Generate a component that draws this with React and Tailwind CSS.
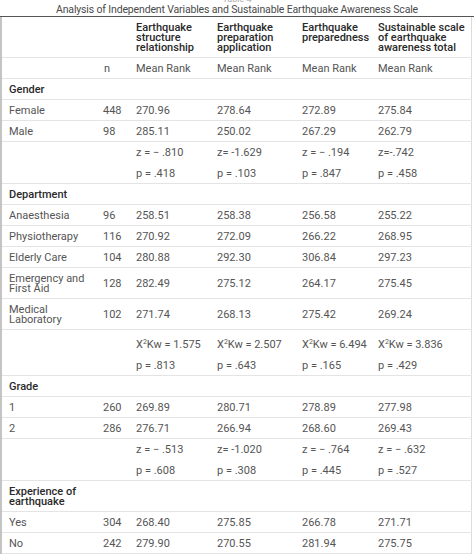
const headers = [
	"Earthquake structure relationship",
	"Earthquake preparation application",
	"Earthquake preparedness",
	"Sustainable scale of earthquake awareness total",
];

const X2 = ({ v }) => (
	<>
		X<span className="relative -top-[4px] text-[7px]">2</span>Kw = {v}
	</>
);

// type: "data" | "section" | "stat1" | "statx" | "stat2"
const rows = [
	{ type: "section", label: "Gender" },
	{ type: "data", label: "Female", n: "448", v: ["270.96", "278.64", "272.89", "275.84"] },
	{ type: "data", label: "Male", n: "98", v: ["285.11", "250.02", "267.29", "262.79"] },
	{ type: "stat1", v: ["z = − .810", "z= -1.629", "z = − .194", "z=-.742"] },
	{ type: "stat2", v: ["p = .418", "p = .103", "p = .847", "p = .458"] },
	{ type: "section", label: "Department" },
	{ type: "data", label: "Anaesthesia", n: "96", v: ["258.51", "258.38", "256.58", "255.22"] },
	{ type: "data", label: "Physiotherapy", n: "116", v: ["270.92", "272.09", "266.22", "268.95"] },
	{ type: "data", label: "Elderly Care", n: "104", v: ["280.88", "292.30", "306.84", "297.23"] },
	{ type: "data", label: "Emergency and First Aid", n: "128", v: ["282.49", "275.12", "264.17", "275.45"] },
	{ type: "data", label: "Medical Laboratory", n: "102", v: ["271.74", "268.13", "275.42", "269.24"] },
	{
		type: "statx",
		v: [<X2 v="1.575" />, <X2 v="2.507" />, <X2 v="6.494" />, <X2 v="3.836" />],
	},
	{ type: "stat2", v: ["p = .813", "p = .643", "p = .165", "p = .429"] },
	{ type: "section", label: "Grade" },
	{ type: "data", label: "1", n: "260", v: ["269.89", "280.71", "278.89", "277.98"] },
	{ type: "data", label: "2", n: "286", v: ["276.71", "266.94", "268.60", "269.43"] },
	{ type: "stat1", v: ["z = − .513", "z= -1.020", "z = − .764", "z = − .632"] },
	{ type: "stat2", v: ["p = .608", "p = .308", "p = .445", "p = .527"] },
	{ type: "section", label: "Experience of earthquake" },
	{ type: "data", label: "Yes", n: "304", v: ["268.40", "275.85", "266.78", "271.71"] },
	{ type: "data", label: "No", n: "242", v: ["279.90", "270.55", "281.94", "275.75"] },
];

const Row = ({ row }) => {
	const pad =
		row.type === "statx"
			? "pt-[10px] pb-[4px]"
			: row.type === "stat1"
			? "pt-[6px] pb-[5px]"
			: "pt-[6px] pb-[4px]";
	const border = row.type === "stat1" || row.type === "statx" ? "" : "border-b border-[#e4e4e4]";

	if (row.type === "section") {
		return (
			<tr className={border}>
				<td className={`pl-[7px] pr-1 ${pad} text-[#2a2a2a] font-medium`}>{row.label}</td>
				<td colSpan={5}></td>
			</tr>
		);
	}

	return (
		<tr className={border}>
			<td className={`pl-[7px] pr-1 ${pad}`}>{row.label}</td>
			<td className={`pl-[3px] ${pad}`}>{row.n}</td>
			{row.v.map((v, i) => (
				<td key={i} className={`pl-[3px] ${pad} whitespace-nowrap`}>
					{v}
				</td>
			))}
		</tr>
	);
};

const App = () => {
	return (
		<div
			className="w-[474px] h-[554px] bg-white overflow-hidden"
			style={{ fontFamily: "Roboto, 'Liberation Sans', sans-serif" }}
		>
			{/* Caption */}
			<div className="h-[16px] overflow-hidden flex flex-col justify-end items-center text-[10.5px] leading-[12px] text-[#555]">
				<div className="text-[9px] leading-[9px] text-[#aaa]">Table 4</div>
				<div className="tracking-[-0.15px] text-[#4a4a4a]">
					Analysis of Independent Variables and Sustainable Earthquake Awareness Scale
				</div>
			</div>
			<div className="h-[1px] bg-[#555]"></div>

			<div className="flex">
				<div className="w-[2px] bg-[#c4c4c4]"></div>
				<div className="w-[470px] border-r border-b border-[#dcdcdc]">
					<table className="w-full table-fixed border-collapse text-[11px] leading-[10px] text-[#555]">
						<colgroup>
							<col className="w-[98px]" />
							<col className="w-[33px]" />
							<col className="w-[81px]" />
							<col className="w-[85px]" />
							<col className="w-[76px]" />
							<col className="w-[97px]" />
						</colgroup>
						<thead>
							<tr className="border-b border-[#e4e4e4]">
								<th></th>
								<th></th>
								{headers.map((h) => (
									<th
										key={h}
										className="pl-[3px] pr-1 pt-[6px] pb-[4px] text-left align-top font-medium text-[#2a2a2a]"
									>
										{h}
									</th>
								))}
							</tr>
							<tr className="border-b border-[#e4e4e4]">
								<td className="pt-[6px] pb-[4px]"></td>
								<td className="pl-[4px] pt-[6px] pb-[4px]">n</td>
								{headers.map((h) => (
									<td key={h} className="pl-[3px] pt-[6px] pb-[4px]">
										Mean Rank
									</td>
								))}
							</tr>
						</thead>
						<tbody>
							{rows.map((row, i) => (
								<Row key={i} row={row} />
							))}
						</tbody>
					</table>
				</div>
			</div>
		</div>
	);
};

export default App;
